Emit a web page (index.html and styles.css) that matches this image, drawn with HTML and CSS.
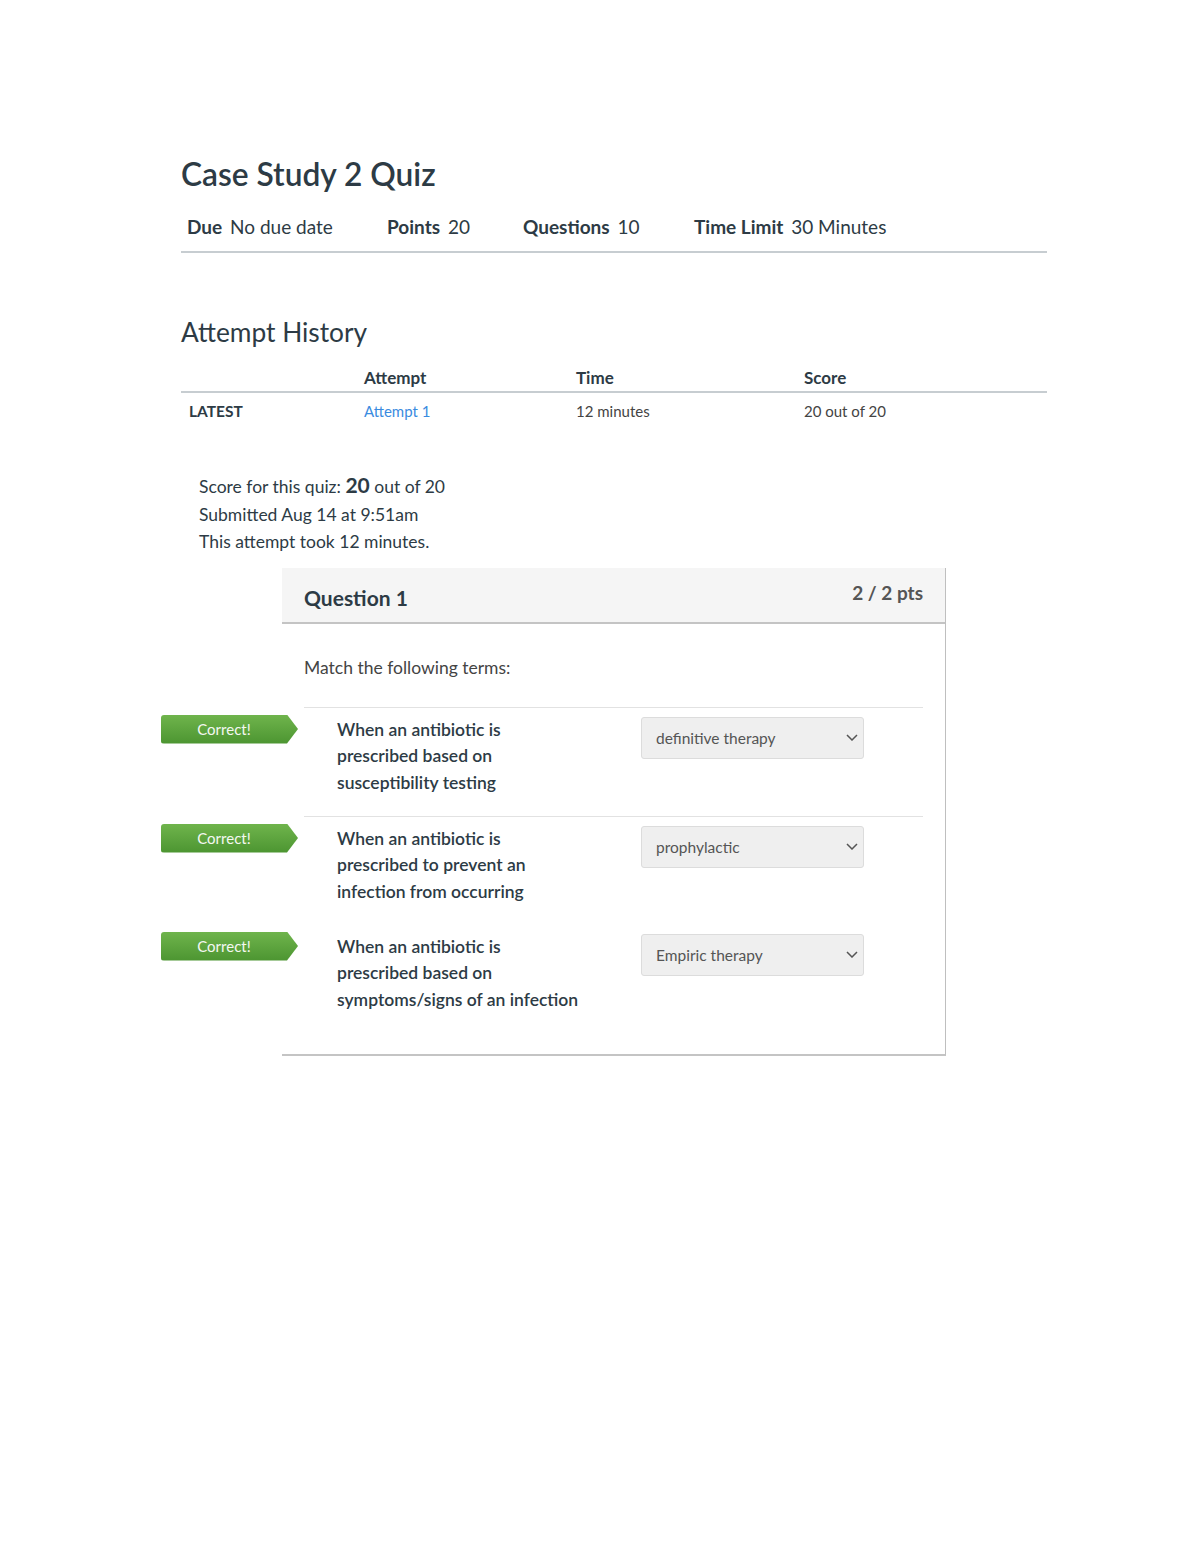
FILE: index.html
```html
<!DOCTYPE html>
<html lang="en">
<head>
  <meta charset="UTF-8">
  <title>Case Study 2 Quiz</title>
  <link rel="stylesheet" href="styles.css">
</head>
<body>
  <div class="page">
    <!-- Quiz header -->
    <h1 class="quiz-title">Case Study 2 Quiz</h1>
    <ul class="quiz-meta">
      <li><b>Due</b> No due date</li>
      <li><b>Points</b> 20</li>
      <li><b>Questions</b> 10</li>
      <li><b>Time Limit</b> 30 Minutes</li>
    </ul>

    <!-- Attempt History -->
    <h2 class="section-title">Attempt History</h2>
    <table class="history">
      <thead>
        <tr>
          <th></th>
          <th>Attempt</th>
          <th>Time</th>
          <th>Score</th>
        </tr>
      </thead>
      <tbody>
        <tr>
          <td class="latest">LATEST</td>
          <td><a href="#">Attempt 1</a></td>
          <td>12 minutes</td>
          <td>20 out of 20</td>
        </tr>
      </tbody>
    </table>

    <div class="summary">
      <div>Score for this quiz: <span class="big-score">20</span> out of 20</div>
      <div>Submitted Aug 14 at 9:51am</div>
      <div>This attempt took 12 minutes.</div>
    </div>

    <!-- Question -->
    <div class="question">
      <div class="question-header">
        <span class="question-name">Question 1</span>
        <span class="question-pts">2 / 2 pts</span>
      </div>
      <div class="question-body">
        <p class="question-text">Match the following terms:</p>

        <div class="match-row divided">
          <span class="badge">Correct!</span>
          <div class="match-term">When an antibiotic is<br>prescribed based on<br>susceptibility testing</div>
          <div class="match-select">
            <span>definitive therapy</span>
            <svg width="12" height="7" viewBox="0 0 12 7"><polyline points="1,1 6,6 11,1" fill="none" stroke="#555" stroke-width="1.5"/></svg>
          </div>
        </div>

        <div class="match-row divided">
          <span class="badge">Correct!</span>
          <div class="match-term">When an antibiotic is<br>prescribed to prevent an<br>infection from occurring</div>
          <div class="match-select">
            <span>prophylactic</span>
            <svg width="12" height="7" viewBox="0 0 12 7"><polyline points="1,1 6,6 11,1" fill="none" stroke="#555" stroke-width="1.5"/></svg>
          </div>
        </div>

        <div class="match-row">
          <span class="badge">Correct!</span>
          <div class="match-term">When an antibiotic is<br>prescribed based on<br>symptoms/signs of an infection</div>
          <div class="match-select">
            <span>Empiric therapy</span>
            <svg width="12" height="7" viewBox="0 0 12 7"><polyline points="1,1 6,6 11,1" fill="none" stroke="#555" stroke-width="1.5"/></svg>
          </div>
        </div>
      </div>
    </div>
  </div>
</body>
</html>
```

FILE: styles.css
```css
/* General Styles */
body {
  margin: 0;
  padding: 0;
  font-family: 'Lato', 'Noto Sans', sans-serif;
  color: #2d3b45;
  background: #fff;
}

.page {
  width: 866px;
  margin-left: 181px;
  padding-top: 154px;
}

/* Quiz header */
.quiz-title {
  margin: 0;
  font-size: 31.7px;
  line-height: 40px;
  font-weight: 600;
}

.quiz-meta {
  list-style: none;
  margin: 21px 0 0;
  padding: 0 0 12px 6px;
  display: grid;
  grid-template-columns: 200px 136px 171px auto;
  font-size: 19px;
  line-height: 24px;
  border-bottom: 2px solid #c7cdd1;
}

.quiz-meta b {
  font-weight: 700;
  margin-right: 3px;
}

/* Attempt History */
.section-title {
  margin: 63px 0 0;
  font-size: 26.3px;
  line-height: 32px;
  font-weight: 400;
}

.history {
  width: 100%;
  margin-top: 19px;
  border-collapse: collapse;
}

.history th {
  text-align: left;
  font-size: 17px;
  line-height: 22px;
  font-weight: 700;
  padding: 0 0 2px;
  border-bottom: 2px solid #c7cdd1;
}

.history th:nth-child(1) { width: 183px; }
.history th:nth-child(2) { width: 212px; }
.history th:nth-child(3) { width: 228px; }

.history td {
  font-size: 15px;
  line-height: 20px;
  padding: 8px 0 0;
  color: #444;
}

.history td.latest {
  padding-left: 8px;
  font-size: 15.5px;
  font-weight: 700;
  color: #2d3b45;
}

.history a {
  color: #3a8be0;
  text-decoration: none;
}

.summary {
  margin: 50px 0 0 18px;
  font-size: 17.5px;
  line-height: 27.5px;
}

.big-score {
  font-size: 21px;
  font-weight: 700;
}

/* Question box */
.question {
  width: 663px;
  margin: 12px 0 0 101px;
  border-right: 1px solid #bfbfbf;
  border-bottom: 2px solid #c4c4c4;
}

.question-header {
  display: flex;
  justify-content: space-between;
  align-items: flex-start;
  height: 54px;
  padding: 0 22px;
  background: #f5f5f5;
  border-bottom: 2px solid #c4c4c4;
}

.question-name {
  margin-top: 17px;
  font-size: 21px;
  line-height: 26px;
  font-weight: 700;
}

.question-pts {
  margin-top: 13px;
  font-size: 19px;
  line-height: 24px;
  font-weight: 700;
  color: #555;
}

.question-body {
  padding: 0 22px 20px;
}

.question-text {
  margin: 33px 0 28px;
  font-size: 17.5px;
  line-height: 22px;
  color: #444;
}

.match-row {
  position: relative;
  display: flex;
  height: 109px;
  box-sizing: border-box;
  padding-top: 9px;
}

.match-row.divided {
  border-top: 1px solid #e2e2e2;
}

.match-term {
  width: 337px;
  flex-shrink: 0;
  padding-left: 33px;
  box-sizing: border-box;
  font-size: 17.5px;
  line-height: 26.5px;
  font-weight: 600;
}

.match-select {
  display: flex;
  justify-content: space-between;
  align-items: center;
  width: 223px;
  height: 42px;
  box-sizing: border-box;
  padding: 0 5px 0 14px;
  background: #efefef;
  border: 1px solid #dcdcdc;
  border-radius: 3px;
  font-size: 15.5px;
  color: #555;
}

/* Correct! flag */
.badge {
  position: absolute;
  left: -143px;
  top: 7px;
  width: 137px;
  height: 29px;
  padding-right: 11px;
  box-sizing: border-box;
  display: flex;
  align-items: center;
  justify-content: center;
  background: linear-gradient(#6fb44c, #4c9531);
  border-radius: 3px 0 0 3px;
  clip-path: polygon(0 0, 126px 0, 137px 50%, 126px 100%, 0 100%);
  color: #f4f8f2;
  font-size: 15px;
}
```
